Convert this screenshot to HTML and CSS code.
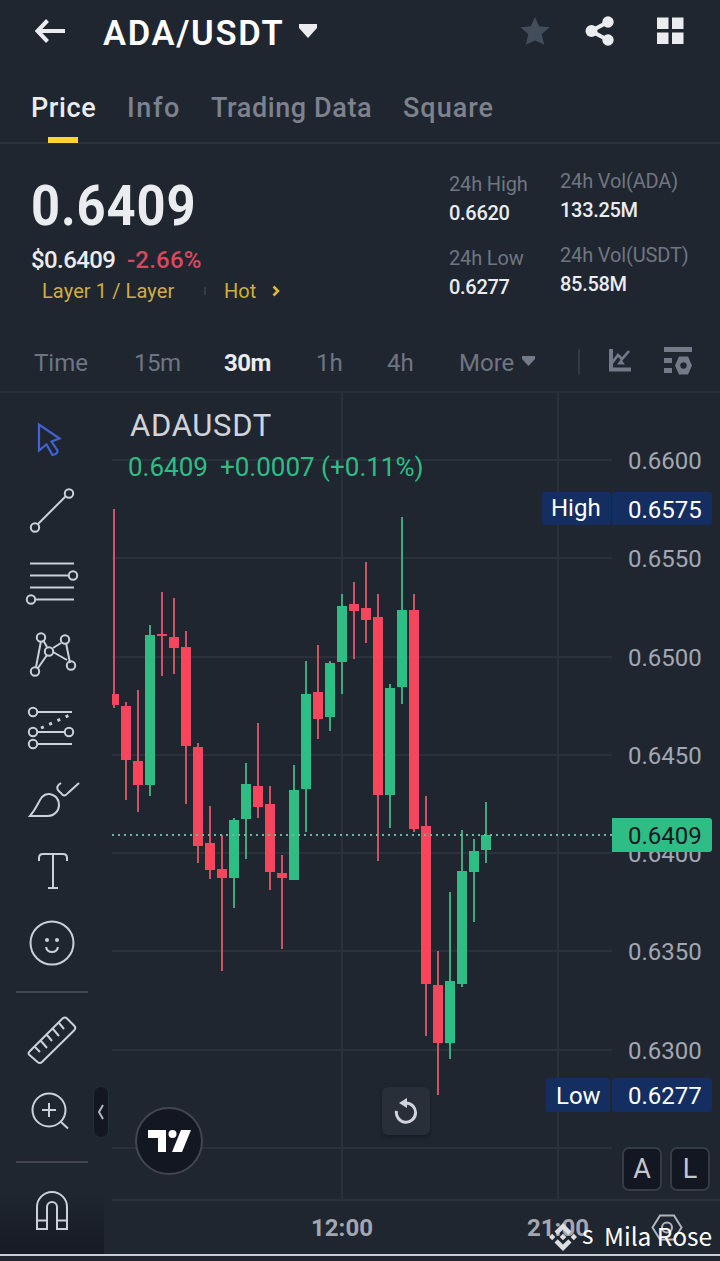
FILE: index.html
```
<!DOCTYPE html>
<html lang="en">
  <head>
    <meta charset="UTF-8" />
    <meta name="viewport" content="width=device-width, initial-scale=1.0" />
    <title>ADA/USDT</title>
    <link rel="stylesheet" href="styles.css">
  </head>

  <body>
    <header class="header">
      <svg class="back" width="32" height="26" viewBox="0 0 32 26">
        <path d="M31 13H3M13.500 2.500L3.500 13l10 10.500" />
      </svg>
      <h1>ADA/USDT</h1>
      <svg class="caret" width="18" height="14" viewBox="0 0 18 14">
        <path d="M0 0h18v4l-9 10-9-10z" />
      </svg>
      <div class="actions">
        <svg width="32" height="32" viewBox="0 0 32 32">
          <path class="star" d="M16 2l4.200 9.300 10.300 1-7.800 6.900 2.600 10.500L16 25.400 6.700 29.700l2.600-10.500L1.500 12.300l10.300-1z" />
        </svg>
        <svg width="32" height="32" viewBox="0 0 32 32">
          <path class="share-line" d="M21 7L4 16l17 9" />
          <circle cx="21" cy="7" r="5.700" />
          <circle cx="4.500" cy="16" r="6" />
          <circle cx="21" cy="25" r="5.700" />
        </svg>
        <svg width="32" height="32" viewBox="0 0 32 32">
          <path d="M3 2.500h11.500V14H3zM18 2.500h11.500V14H18zM3 17.500h11.500V29H3zM18 17.500h11.500V29H18z" />
        </svg>
      </div>
    </header>

    <nav class="tabs">
      <a class="tab tab-price active">Price</a>
      <a class="tab tab-info">Info</a>
      <a class="tab tab-data">Trading Data</a>
      <a class="tab tab-square">Square</a>
    </nav>

    <section class="ticker">
      <div class="quote">
        <div class="last">0.6409</div>
        <div class="fiat">
          <span class="usd">$0.6409</span>
          <span class="change">-2.66%</span>
        </div>
        <div class="tags">
          <span class="layer">Layer 1 / Layer</span>
          <i class="tag-divider"></i>
          <span class="hot">Hot</span>
          <svg width="8" height="12" viewBox="0 0 8 12"><path d="M1.500 1.500L6 6l-4.500 4.500" /></svg>
        </div>
      </div>
      <dl class="stats range">
        <dt>24h High</dt>
        <dd>0.6620</dd>
        <dt>24h Low</dt>
        <dd>0.6277</dd>
      </dl>
      <dl class="stats volume">
        <dt>24h Vol(ADA)</dt>
        <dd>133.25M</dd>
        <dt>24h Vol(USDT)</dt>
        <dd>85.58M</dd>
      </dl>
    </section>

    <nav class="intervals">
      <span class="i-time">Time</span>
      <span class="i-15">15m</span>
      <span class="i-30 selected">30m</span>
      <span class="i-1h">1h</span>
      <span class="i-4h">4h</span>
      <span class="i-more">More</span>
      <svg class="more-caret" width="13" height="10" viewBox="0 0 13 10"><path d="M0 0h13v3L6.500 10 0 3z" /></svg>
      <i class="bar-divider"></i>
      <svg class="indicator" width="24" height="24" viewBox="0 0 24 24">
        <path class="stroke" d="M2 0v20.500H22" stroke-width="4" />
        <path class="stroke" d="M3 14l6-8 4 4 7-8" stroke-width="2.600" />
        <path d="M12 10l4 5.500H8z" />
      </svg>
      <svg class="settings" width="28" height="30" viewBox="0 0 28 30">
        <path d="M0 1h28v5H0zM0 12h8v5H0zM0 22h8v5H0z" />
        <path fill-rule="evenodd" d="M15 10.500h9l4 9-4 9h-9l-4-9zM19.500 16.200a3.300 3.300 0 1 0 .01 0z" />
      </svg>
    </nav>

    <main class="chart">
      <aside class="tools">
        <svg class="tool" viewBox="0 0 56 72">
          <path class="cursor" d="M15 31.500v26l7.500-6 6 10.500q5.500-1 5-4.500l-6-9 8-3z" />
        </svg>
        <svg class="tool" viewBox="0 0 56 72">
          <path d="M14 59l28-28" />
          <circle cx="11" cy="62.500" r="4.200" /><circle cx="45" cy="28.500" r="4.200" />
        </svg>
        <svg class="tool" viewBox="0 0 56 72">
          <path d="M6 26.500h44M6 38.500h39M6 50.500h44M11 62.500h39" />
          <circle cx="49" cy="38.500" r="4.200" /><circle cx="7" cy="62.500" r="4.200" />
        </svg>
        <svg class="tool" viewBox="0 0 56 72">
          <path d="M12 58l5-26M19 31l4 7M14 59l9-13M29 39l8-5M42 34l4 20M29 43l14 8" />
          <circle cx="17" cy="28.500" r="4.200" /><circle cx="41" cy="30.500" r="4.200" />
          <circle cx="25" cy="42.500" r="4.200" /><circle cx="47" cy="56.500" r="4.200" />
          <circle cx="11" cy="62.500" r="4.200" />
        </svg>
        <svg class="tool" viewBox="0 0 56 72">
          <path d="M13 31h35M13 51h28M13 63h35" />
          <path class="dots" d="M17 47l29-13" />
          <circle cx="9" cy="31" r="4.200" /><circle cx="9" cy="51" r="4.200" />
          <circle cx="45" cy="51" r="4.200" /><circle cx="9" cy="63" r="4.200" />
        </svg>
        <svg class="tool" viewBox="0 0 56 72">
          <path d="M6 63C13 55 14 49 18 44c6-6 17-2 17 8 0 6-5 11-11 11zM37 30c-5 3-5 6 0 10q3 5 7 0l11-10" />
        </svg>
        <svg class="tool" viewBox="0 0 56 72">
          <path d="M15 36v-3q0-4 4-4h20q4 0 4 4v3M29 29v34M24 63h10" />
        </svg>
        <svg class="tool" viewBox="0 0 56 72">
          <circle cx="28" cy="46" r="21.500" />
          <path d="M22 50q1 5 6 5t6-5" />
          <circle class="fill" cx="23" cy="43" r="2" /><circle class="fill" cx="33" cy="43" r="2" />
        </svg>
        <hr />
        <svg class="tool ruler" viewBox="0 0 56 72">
          <path d="M5.500 46.500L38.500 13.500q2.500-2 4.500 0l7 7q2.500 2.500 0 5L18 57q-2 2-4.500 0l-8-7q-2-2 0-3.500zM11 42l5 5M17 36l6 7M23 30l5 6M29 24l6 7M35 18l5 6" />
        </svg>
        <svg class="tool" viewBox="0 0 56 72">
          <circle cx="25" cy="33" r="16.500" /><path d="M25 26v14M18 33h14M36.500 44.500l7.500 7" />
        </svg>
        <hr class="low-rule" />
        <svg class="tool" viewBox="0 0 56 72">
          <path d="M13 66V44a15 15 0 0 1 30 0v22H33V44a5 5 0 0 0-10 0v22zM13 57.500h10M33 57.500h10" />
        </svg>
        <button class="collapse" type="button">
          <svg width="8" height="16" viewBox="0 0 8 16"><path d="M6 1L2 8l4 7" /></svg>
        </button>
      </aside>

      <div class="plot">
        <svg class="canvas" width="616" height="862" viewBox="104 393 616 862">
          <g id="grid"></g>
          <g id="candles"></g>
          <path class="last-line" d="M112 835H612" />
          <text class="symbol" x="130" y="436">ADAUSDT</text>
          <text class="move" x="128" y="476">0.6409</text>
          <text class="move" x="220" y="476">+0.0007 (+0.11%)</text>
          <g id="scale"></g>
          <rect class="extreme" x="542" y="492" width="69" height="33" rx="2" />
          <rect class="extreme" x="612" y="492" width="100" height="33" rx="2" />
          <text class="extreme-text" x="551" y="516">High</text>
          <text class="extreme-text" x="628" y="518">0.6575</text>
          <rect class="extreme" x="546" y="1078" width="64" height="34" rx="2" />
          <rect class="extreme" x="612" y="1078" width="100" height="34" rx="2" />
          <text class="extreme-text" x="556" y="1104">Low</text>
          <text class="extreme-text" x="628" y="1104">0.6277</text>
          <path class="last-tag" d="M612 818h97q3 0 3 3v28q0 3-3 3h-97z" />
          <text class="last-text" x="628" y="844">0.6409</text>
          <text class="time" x="342" y="1236">12:00</text>
          <text class="time" x="558" y="1236">21:00</text>
          <path class="gear" d="M660 1215.500h14l7.500 12-7.500 12h-14l-7.500-12z" />
          <circle class="gear" cx="667" cy="1227.500" r="5" />
        </svg>

        <div class="logo">
          <svg width="44" height="24" viewBox="0 0 44 24">
            <path d="M1 1h18v22h-8V9H1zM34 1h10l-9 22H25z" />
            <circle cx="25.500" cy="5" r="4" />
          </svg>
        </div>
        <button class="reset" type="button">
          <svg width="24" height="26" viewBox="0 0 24 26">
            <path class="arc" d="M2.500 13A9.600 9.600 0 1 0 12 5" />
            <path class="head" d="M5 5l8-5v10z" />
          </svg>
        </button>
        <div class="scale-modes">
          <button type="button">A</button>
          <button type="button">L</button>
        </div>
        <div class="author">
          <svg width="28" height="28" viewBox="0 0 28 28">
            <path d="M14 0l8.500 8.500-3.200 3.200L14 6.400l-5.300 5.300-3.200-3.200zM14 10.700l3.300 3.300-3.300 3.300-3.300-3.300zM3.200 10.800L6.400 14l-3.200 3.200L0 14zM24.800 10.800L28 14l-3.200 3.200-3.200-3.200zM8.700 16.300l5.300 5.300 5.300-5.300 3.200 3.200L14 28l-8.500-8.500z" />
          </svg>
          <span class="initial">s</span>
          <span class="name">Mila Rose</span>
        </div>
      </div>
    </main>
    <script src="chart.js"></script>
  </body>
</html>
```
FILE: chart.js
```
const SVG = "http://www.w3.org/2000/svg";
const FIRST_X = 114;
const STEP = 12;

// [direction, high, body top, body bottom, low]
const candles = [
  ["down", 509, 694, 705, 708],
  ["down", 702, 706, 760, 800],
  ["down", 690, 761, 785, 812],
  ["up", 625, 635, 785, 796],
  ["down", 592, 634, 636, 676],
  ["down", 598, 637, 648, 674],
  ["down", 631, 647, 746, 804],
  ["down", 743, 747, 846, 863],
  ["down", 806, 843, 870, 879],
  ["down", 835, 869, 878, 971],
  ["up", 818, 820, 878, 908],
  ["up", 763, 784, 819, 859],
  ["down", 723, 786, 807, 818],
  ["down", 786, 804, 872, 890],
  ["down", 855, 873, 878, 949],
  ["up", 765, 790, 880, 880],
  ["up", 661, 694, 789, 832],
  ["down", 645, 692, 719, 739],
  ["up", 661, 663, 717, 731],
  ["up", 594, 606, 662, 694],
  ["down", 582, 604, 611, 659],
  ["down", 562, 608, 620, 643],
  ["down", 594, 617, 795, 861],
  ["up", 684, 688, 795, 828],
  ["up", 517, 610, 687, 704],
  ["down", 594, 610, 829, 832],
  ["down", 796, 826, 984, 1036],
  ["down", 951, 985, 1043, 1095],
  ["up", 892, 981, 1043, 1059],
  ["up", 830, 871, 984, 987],
  ["up", 839, 851, 872, 922],
  ["up", 802, 835, 850, 863]
];

const prices = ["0.6600", "0.6550", "0.6500", "0.6450", "0.6400", "0.6350", "0.6300"];

function add(parent, name, attributes, text) {
  const el = document.createElementNS(SVG, name);
  Object.entries(attributes).forEach(([key, value]) => {
    el.setAttribute(key, value);
  });
  if (text) {
    el.textContent = text;
  }
  document.getElementById(parent).appendChild(el);
}

for (let i = 0; i < 8; i++) {
  const y = Math.round(460 + i * 98.25);
  add("grid", "path", { d: `M112 ${y}H612` });
  if (prices[i]) {
    add("scale", "text", { x: 628, y: y + 9 }, prices[i]);
  }
}
add("grid", "path", { d: "M342 393V1200" });
add("grid", "path", { d: "M558 393V1200" });
add("grid", "path", { d: "M112 1200H720" });

candles.forEach(([direction, high, top, bottom, low], i) => {
  const x = FIRST_X + i * STEP;
  const left = Math.max(x - 5, 112);
  add("candles", "rect", { class: direction + " wick", x: x - 1, y: high, width: 2, height: low - high });
  add("candles", "rect", { class: direction, x: left, y: top, width: x + 5 - left, height: bottom - top });
});
```
FILE: styles.css
```
* {
  box-sizing: border-box;
  margin: 0;
  padding: 0;
}

body {
  width: 720px;
  height: 1261px;
  overflow: hidden;
  background: #1f2630;
  color: #eaecef;
  font-family: Roboto, "Liberation Sans", sans-serif;
}

svg {
  display: block;
  flex: none;
}

button {
  font: inherit;
  border: none;
}

/* header */
.header {
  display: flex;
  align-items: center;
  height: 64px;
  padding: 0 34px 2px;
}

.back {
  fill: none;
  stroke: #eaecef;
  stroke-width: 4;
}

h1 {
  width: 181px;
  margin-left: 37px;
  padding-top: 3px;
  color: #fff;
  font-size: 34.5px;
  font-weight: 600;
  letter-spacing: 1.7px;
  white-space: nowrap;
}

.caret {
  margin-left: 15px;
  fill: #eaecef;
}

.actions {
  display: flex;
  gap: 35.5px;
  margin-left: auto;
  fill: #eaecef;
}

.star {
  fill: #434c5a;
}

.share-line {
  fill: none;
  stroke: #eaecef;
  stroke-width: 4;
}

.actions svg {
  overflow: visible;
}

/* tabs */
.tabs {
  display: flex;
  height: 80px;
  padding: 27px 31px 0;
  border-bottom: 2px solid #2b313b;
  color: #7d828e;
  font-size: 27px;
  line-height: 34px;
  font-weight: 500;
  letter-spacing: .6px;
  white-space: nowrap;
}

.tab-price {
  width: 96px;
}

.tab-info {
  width: 84px;
  letter-spacing: 1.6px;
}

.tab-data {
  width: 192px;
}

.tab-square {
  letter-spacing: 1px;
}

.tab.active {
  position: relative;
  color: #eaecef;
}

.tab.active::after {
  content: "";
  position: absolute;
  left: 17px;
  bottom: -1px;
  width: 30px;
  height: 6px;
  background: #fcd535;
}

/* ticker */
.ticker {
  display: flex;
  height: 190px;
  padding-left: 31px;
}

.quote {
  width: 418px;
  padding-top: 30px;
}

.last {
  font-size: 56px;
  line-height: 64px;
  font-weight: 700;
  letter-spacing: 1px;
  transform: scaleX(.905);
  transform-origin: left;
}

.fiat {
  display: flex;
  margin-top: 8px;
  font-size: 24px;
  line-height: 28px;
  font-weight: 500;
}

.usd {
  width: 96px;
  letter-spacing: -.6px;
}

.change {
  color: #d9485f;
  letter-spacing: .2px;
}

.tags {
  display: flex;
  align-items: center;
  margin-top: 4px;
  padding-left: 11px;
  color: #cfae3f;
  font-size: 20px;
  line-height: 26px;
}

.layer {
  width: 162px;
  letter-spacing: .1px;
}

.tag-divider {
  width: 2px;
  height: 8px;
  margin-right: 18px;
  background: #353c47;
}

.hot {
  width: 48px;
}

.tags svg {
  fill: none;
  stroke: #e0b93d;
  stroke-width: 2.5;
}

.stats {
  padding-top: 28px;
  font-size: 20px;
  line-height: 24px;
  letter-spacing: -.15px;
}

.volume {
  padding-top: 25px;
}

.range {
  width: 111px;
}

.stats dt {
  color: #6f7682;
}

.stats dd {
  margin: 5px 0 21px;
  font-weight: 500;
  letter-spacing: -.3px;
}

/* intervals */
.intervals {
  display: flex;
  align-items: center;
  height: 59px;
  padding: 0 28px 0 34px;
  border-bottom: 2px solid #272e38;
  color: #6f7682;
  font-size: 24px;
}

.i-time {
  width: 100px;
}

.i-15 {
  width: 90px;
  letter-spacing: -.5px;
}

.i-30 {
  width: 92px;
  letter-spacing: -.5px;
}

.i-1h {
  width: 71px;
}

.i-4h {
  width: 72px;
}

.i-more {
  width: 63px;
}

.selected {
  color: #eaecef;
  font-weight: 700;
}

.intervals svg {
  margin-bottom: 3px;
  fill: #747a88;
}

.bar-divider {
  width: 2px;
  height: 25px;
  margin-left: 43px;
  margin-bottom: 3px;
  background: #333a45;
}

.indicator {
  margin-left: 29px;
}

.intervals .stroke {
  fill: none;
  stroke: #747a88;
}

.settings {
  margin-left: auto;
}

/* chart */
.chart {
  display: flex;
  height: 863px;
  border-bottom: 2px solid #c9ccd2;
}

.tools {
  position: relative;
  width: 104px;
  height: 861px;
  padding: 0 24px;
  background: linear-gradient(transparent 800px, #161a25 861px);
}

.tool {
  width: 56px;
  height: 72px;
  overflow: visible;
  fill: none;
  stroke: #ccd0da;
  stroke-width: 2;
}

.tool .cursor {
  stroke: #4263d2;
  stroke-width: 2.2;
}

.tool .dots {
  stroke-width: 3;
  stroke-dasharray: 3 6;
}

.tool .fill {
  fill: #ccd0da;
  stroke: none;
}

.tools hr {
  height: 2px;
  margin: 22px -8px;
  border: none;
  background: #434651;
}

.tools .ruler {
  margin-top: -10px;
}

.tools .low-rule {
  margin-top: 12px;
  margin-bottom: 0;
}

.collapse {
  position: absolute;
  left: 93px;
  top: 693px;
  display: flex;
  align-items: center;
  justify-content: center;
  width: 16px;
  height: 52px;
  border: 1px solid #292c35;
  border-radius: 8px;
  background: #131722;
}

.collapse svg {
  fill: none;
  stroke: #b2b5be;
  stroke-width: 2;
}

.plot {
  position: relative;
  width: 616px;
}

#grid path {
  stroke: #2a313b;
  stroke-width: 2;
}

.up {
  fill: #2ebd85;
}

.down {
  fill: #f6465d;
}

.wick.up {
  fill: #3fa87d;
}

.wick.down {
  fill: #cf5266;
}

.last-line {
  stroke: #6fb79b;
  stroke-width: 2;
  stroke-dasharray: 2 4;
}

.canvas {
  font-size: 24px;
}

.symbol {
  fill: #d1d4dc;
  font-size: 31px;
  letter-spacing: .7px;
}

.move {
  fill: #2ebd85;
  font-size: 26px;
}

#scale {
  fill: #a3a7b2;
}

.extreme {
  fill: #142e61;
}

.extreme-text {
  fill: #fff;
}

.last-tag {
  fill: #2ebd85;
}

.last-text {
  fill: #131722;
}

.time {
  fill: #a3a7b2;
  font-weight: 700;
  text-anchor: middle;
}

.gear {
  fill: none;
  stroke: #b2b5be;
  stroke-width: 2;
}

.logo {
  position: absolute;
  left: 31px;
  top: 714px;
  display: flex;
  align-items: center;
  justify-content: center;
  width: 68px;
  height: 68px;
  border: 2px solid #434651;
  border-radius: 50%;
  background: #131722;
  fill: #fff;
}

.reset {
  position: absolute;
  left: 278px;
  top: 694px;
  display: flex;
  align-items: center;
  justify-content: center;
  width: 48px;
  height: 48px;
  border-radius: 6px;
  background: #292f39;
  box-shadow: 0 2px 4px rgba(0, 0, 0, .3);
}

.arc {
  fill: none;
  stroke: #d1d4dc;
  stroke-width: 3;
}

.head {
  fill: #d1d4dc;
}

.scale-modes {
  position: absolute;
  right: 10px;
  top: 754px;
  display: flex;
  gap: 8px;
}

.scale-modes button {
  width: 40px;
  height: 44px;
  border: 2px solid #373b45;
  border-radius: 7px;
  background: #131722;
  color: #c4c7d0;
  font-size: 27px;
}

.author {
  position: absolute;
  left: 445px;
  top: 830px;
  display: flex;
  align-items: center;
  color: #fff;
  font-family: "Noto Sans CJK SC", "Noto Sans", sans-serif;
  font-size: 24.5px;
  line-height: 30px;
  white-space: nowrap;
}

.author svg {
  fill: #dcdee1;
}

.author .name {
  margin-top: -2px;
}

.initial {
  width: 22px;
  margin-left: 5px;
  margin-top: -6px;
}
```
